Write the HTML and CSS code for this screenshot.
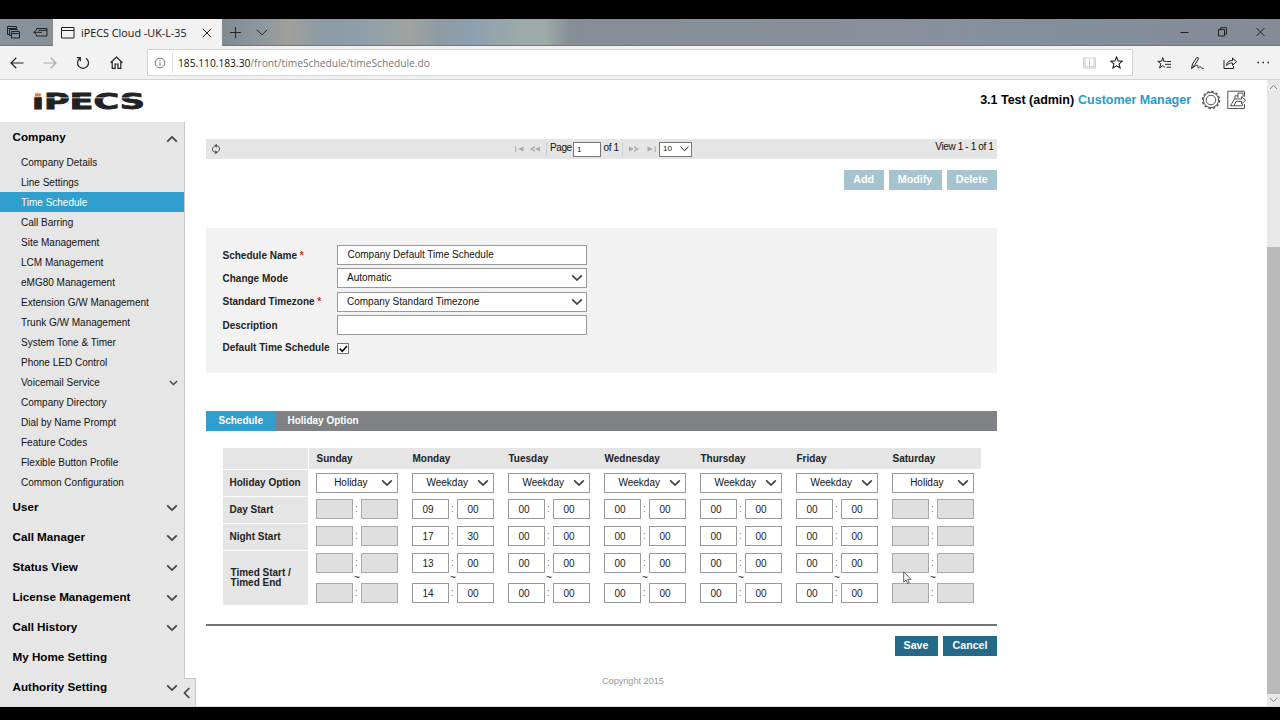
FILE: index.html
```html
<!DOCTYPE html>
<html lang="en">
<head>
<meta charset="utf-8">
<title>iPECS Cloud -UK-L-35</title>
<link rel="stylesheet" href="styles.css">
</head>
<body>
<svg class="defs" width="0" height="0">
  <symbol id="down" viewBox="0 0 12 8"><path d="M1.2 1.4 6 6.1l4.8-4.7" fill="none" stroke="currentColor" stroke-width="1.8"/></symbol>
</svg>
<div class="tabstrip">
  <svg class="strip-icon" width="13" height="13" viewBox="0 0 13 13"><path d="M2.5 8.5h-2v-8h9v2M.5 2.5h9M4.500 9.500h-2v-6h8v1M4.500 5.500h8v6.500h-8zM4.500 7.500h8"/></svg>
  <svg class="strip-icon aside" width="15" height="10" viewBox="0 0 15 10"><path d="M3.500 3V1.500h10.500v7.500H3.500V7.500M5.500 3.300h8.500M.8 5.300h8.200M3.200 3.200.9 5.300l2.300 2.200"/></svg>
  <div class="tab">
    <svg class="page-icon" width="14" height="12" viewBox="0 0 14 12"><path d="M.5.5h12.500v10.500H.5zM.5 3.500h12.500"/></svg>
    <span class="tab-title">iPECS Cloud -UK-L-35</span>
    <svg class="tab-close" width="10" height="10" viewBox="0 0 10 10"><path d="M.7.7l8.500 8.600M9.200.7.7 9.300"/></svg>
  </div>
  <svg class="plus" width="11" height="11" viewBox="0 0 11 11"><path d="M5.500 0v11M0 5.500h11"/></svg>
  <svg class="tabs-down" width="12" height="7" viewBox="0 0 12 7"><path d="M.8.8 6 5.800 11.200.8"/></svg>
  <div class="window-buttons">
    <svg width="9" height="10" viewBox="0 0 9 10"><path d="M.5 5.500h8"/></svg>
    <svg width="9" height="10" viewBox="0 0 9 10"><path d="M.5 2.500h6v6.500h-6zM2.500 2.500v-1.800h6v6.300h-2"/></svg>
    <svg width="9" height="10" viewBox="0 0 9 10"><path d="M.5 1l8 8M8.500 1l-8 8"/></svg>
  </div>
</div>
<div class="toolbar">
  <svg class="nav-icon back" width="14" height="12" viewBox="0 0 14 12"><path d="M1 6h12.500M6.300.8 1 6l5.300 5.200"/></svg>
  <svg class="nav-icon forward" width="14" height="12" viewBox="0 0 14 12"><path d="M.5 6h12M7.700.8 13 6l-5.300 5.200"/></svg>
  <svg class="nav-icon reload" width="14" height="14" viewBox="0 0 14 14"><path d="M4 2.200a5.500 5.500 0 1 0 6 0M4.300 5.200V1.700H.9" /></svg>
  <svg class="nav-icon home" width="13" height="13" viewBox="0 0 13 13"><path d="M.6 6.800 6.500 1l5.900 5.800M2.200 5.500v6.800h2.900V8h2.800v4.300h2.900V5.500"/></svg>
  <div class="address">
    <svg class="info" width="12" height="12" viewBox="0 0 12 12"><circle cx="6" cy="6" r="4.900"/><path d="M6 5v3.700M6 3.200v1.100"/></svg>
    <span class="divider"></span>
    <span class="url"><b>185.110.183.30</b>/front/timeSchedule/timeSchedule.do</span>
    <svg class="reader" width="13" height="12" viewBox="0 0 13 12"><path d="M.6 1h5.100l.8.700.8-.7h5.100v10H7.300l-.8.600-.8-.6H.6zM6.500 1.700v9.500M2 1v8.600h3.500M11 1v8.600H7.500"/></svg>
    <svg class="star" width="13" height="13" viewBox="0 0 13 13"><path d="M6.500 1l1.600 3.900 4.200.3-3.200 2.700 1 4.100-3.600-2.200L2.900 12l1-4.100L.7 5.200l4.200-.3z"/></svg>
  </div>
  <div class="tools">
    <svg width="15" height="14" viewBox="0 0 15 14"><path d="M9 5.300H6.800L5.700 1.500 4.500 5.300H.8l3 2.400-1.200 4.200L5.700 9.600l2.200 1.700M9.500 5.500h4.500M8 8.300h6M9.500 11.200h4.500"/></svg>
    <svg width="15" height="14" viewBox="0 0 15 14"><path d="M1.500 12.500 2.500 8 6.500 1.800q2.300-1 2 1L5 8.500l-3.500 4c3.500-2.500 5-3.500 6-3.300s-.5 2.300.7 2.500 1.500-1.500 2.400-.9.500 1.500 1.600 1.500h1.500"/></svg>
    <svg width="15" height="14" viewBox="0 0 15 14"><path d="M1 4v8.500h9.500V10M3.500 9.500c.5-3.500 2.500-5 6-5V2L13.500 5.700 9.500 9.300V7c-2.700 0-4.300.6-6 2.500z"/></svg>
    <svg width="15" height="14" viewBox="0 0 15 14"><path class="dots" d="M1.500 6.500H3M6.500 6.500H8M11.500 6.500H13"/></svg>
  </div>
</div>
<div class="page">
  <header>
    <svg class="logo" width="118" height="22" viewBox="0 0 118 22" role="img" aria-label="iPECS">
      <text x="1" y="16.700" textLength="113" lengthAdjust="spacingAndGlyphs">iPECS</text>
      <path class="logo-mask" d="M1 0h11.200v5.200H1z"/>
      <path class="logo-dot" d="M3.900 1.300h6v3.300h-6z"/>
      <path class="logo-cut" d="M14 5.800h99"/>
    </svg>
    <div class="account">
      <span>3.1 Test (admin)</span> <span class="role">Customer Manager</span>
      <svg class="gear" width="20" height="20" viewBox="0 0 20 20"><circle cx="10" cy="10" r="4.800"/><circle cx="10" cy="10" r="8.500" stroke-width="1.300" stroke-dasharray="2.600 1.850"/><circle cx="10" cy="10" r="7.600"/></svg>
      <svg class="logout" width="20" height="20" viewBox="0 0 20 20"><path d="M17.500 6.500V1.200H.8v17.300h16.700v-4.500M11 8V3H16v4M8 9V5.800h3M3.500 15.800 7.500 9h7V6.800l4.200 3.500-4.200 3.700v-2.600H9L7 15.800M3.500 15.800h12V14"/></svg>
    </div>
  </header>
  <div class="body">
    <nav>
      <div class="group">Company<svg class="chev up"><use href="#down"/></svg></div>
      <ul>
        <li>Company Details</li><li>Line Settings</li><li class="on">Time Schedule</li><li>Call Barring</li><li>Site Management</li><li>LCM Management</li><li>eMG80 Management</li><li>Extension G/W Management</li><li>Trunk G/W Management</li><li>System Tone &amp; Timer</li><li>Phone LED Control</li><li>Voicemail Service<svg class="chev small"><use href="#down"/></svg></li><li>Company Directory</li><li>Dial by Name Prompt</li><li>Feature Codes</li><li>Flexible Button Profile</li><li>Common Configuration</li>
      </ul>
      <div class="group">User<svg class="chev"><use href="#down"/></svg></div>
      <div class="group">Call Manager<svg class="chev"><use href="#down"/></svg></div>
      <div class="group">Status View<svg class="chev"><use href="#down"/></svg></div>
      <div class="group">License Management<svg class="chev"><use href="#down"/></svg></div>
      <div class="group">Call History<svg class="chev"><use href="#down"/></svg></div>
      <div class="group">My Home Setting</div>
      <div class="group">Authority Setting<svg class="chev"><use href="#down"/></svg></div>
      <div class="collapse"><svg width="8" height="12" viewBox="0 0 8 12"><path d="M6.300 1 1.500 6l4.800 5"/></svg></div>
    </nav>
    <main>
      <div class="pager">
        <svg class="refresh" width="10" height="12" viewBox="0 0 10 12"><path d="M4 9.200C1.200 8.800.8 5.500 2.500 3.800L3.700 2.800M6 2.800c2.800.4 3.200 3.700 1.500 5.400L6.300 9.200"/><path class="fill" d="M5.800.8v4L3.300 2.800zM4.200 7.200v4L6.700 9.200z"/></svg>
        <div class="pager-mid">
          <svg width="9" height="6" viewBox="0 0 9 6"><path d="M.3 0h1v6h-1zM8.500.5v5L3 3z"/></svg>
          <svg class="prev" width="10" height="6" viewBox="0 0 10 6"><path d="M5 0v1.500L2.500 3 5 4.500V6L0 3zM10 .5v5L5 3z"/></svg>
          <span class="sep"></span><span class="pg">Page</span><span class="pg-input">1</span><span class="pg of">of 1</span><span class="sep"></span>
          <svg class="next" width="10" height="6" viewBox="0 0 10 6"><path d="M5 0v1.500L7.500 3 5 4.500V6l5-3zM0 .5v5L5 3z"/></svg>
          <svg class="last" width="9" height="6" viewBox="0 0 9 6"><path d="M7.700 0h1v6h-1zM.5.5v5L6 3z"/></svg>
          <span class="pg-size">10<svg width="9" height="6" viewBox="0 0 9 6"><path d="M.5.600 4.500 4.800 8.500.6"/></svg></span>
        </div>
        <span class="view">View 1 - 1 of 1</span>
      </div>
      <div class="actions muted"><span class="w1">Add</span><span class="w2">Modify</span><span class="w3">Delete</span></div>
      <div class="form">
        <div class="row"><label>Schedule Name <em>*</em></label><div class="field text">Company Default Time Schedule</div></div>
        <div class="row"><label>Change Mode</label><div class="field">Automatic<svg class="chev"><use href="#down"/></svg></div></div>
        <div class="row"><label>Standard Timezone <em>*</em></label><div class="field">Company Standard Timezone<svg class="chev"><use href="#down"/></svg></div></div>
        <div class="row"><label>Description</label><div class="field"></div></div>
        <div class="row check-row"><label>Default Time Schedule</label><span class="check"><svg width="9" height="8" viewBox="0 0 9 8"><path d="M.8 3.700 3.300 6.300 8 1"/></svg></span></div>
      </div>
      <div class="tabs"><span class="on">Schedule</span><span>Holiday Option</span></div>
      <div class="grid">
        <div class="th head"></div>
        <div class="day">Sunday</div><div class="day">Monday</div><div class="day">Tuesday</div><div class="day">Wednesday</div><div class="day">Thursday</div><div class="day">Friday</div><div class="day">Saturday</div>
        <div class="th">Holiday Option</div>
        <div class="sel hol">Holiday<svg class="chev"><use href="#down"/></svg></div><div class="sel">Weekday<svg class="chev"><use href="#down"/></svg></div><div class="sel">Weekday<svg class="chev"><use href="#down"/></svg></div><div class="sel">Weekday<svg class="chev"><use href="#down"/></svg></div><div class="sel">Weekday<svg class="chev"><use href="#down"/></svg></div><div class="sel">Weekday<svg class="chev"><use href="#down"/></svg></div><div class="sel hol">Holiday<svg class="chev"><use href="#down"/></svg></div>
        <div class="th">Day Start</div>
        <div class="time off"><b></b>:<b></b></div><div class="time"><b>09</b>:<b>00</b></div><div class="time"><b>00</b>:<b>00</b></div><div class="time"><b>00</b>:<b>00</b></div><div class="time"><b>00</b>:<b>00</b></div><div class="time"><b>00</b>:<b>00</b></div><div class="time off"><b></b>:<b></b></div>
        <div class="th">Night Start</div>
        <div class="time off"><b></b>:<b></b></div><div class="time"><b>17</b>:<b>30</b></div><div class="time"><b>00</b>:<b>00</b></div><div class="time"><b>00</b>:<b>00</b></div><div class="time"><b>00</b>:<b>00</b></div><div class="time"><b>00</b>:<b>00</b></div><div class="time off"><b></b>:<b></b></div>
        <div class="th timed">Timed Start /<br>Timed End</div>
        <div class="range"><div class="time off"><b></b>:<b></b></div><i>~</i><div class="time off"><b></b>:<b></b></div></div>
        <div class="range"><div class="time"><b>13</b>:<b>00</b></div><i>~</i><div class="time"><b>14</b>:<b>00</b></div></div>
        <div class="range"><div class="time"><b>00</b>:<b>00</b></div><i>~</i><div class="time"><b>00</b>:<b>00</b></div></div>
        <div class="range"><div class="time"><b>00</b>:<b>00</b></div><i>~</i><div class="time"><b>00</b>:<b>00</b></div></div>
        <div class="range"><div class="time"><b>00</b>:<b>00</b></div><i>~</i><div class="time"><b>00</b>:<b>00</b></div></div>
        <div class="range"><div class="time"><b>00</b>:<b>00</b></div><i>~</i><div class="time"><b>00</b>:<b>00</b></div></div>
        <div class="range"><div class="time off"><b></b>:<b></b></div><i>~</i><div class="time off"><b></b>:<b></b></div></div>
      </div>
      <div class="rule"></div>
      <div class="actions"><span class="w4">Save</span><span class="w5">Cancel</span></div>
      <footer>Copyright 2015</footer>
    </main>
  </div>
  <div class="scrollbar">
    <svg width="9" height="6" viewBox="0 0 9 6"><path d="M1 5l3.500-3.700L8 5"/></svg>
    <div class="thumb"></div>
    <svg width="9" height="6" viewBox="0 0 9 6"><path d="M1 1l3.500 3.700L8 1"/></svg>
  </div>
</div>
<svg class="cursor" width="9" height="14" viewBox="0 0 9 14"><path d="M.7.800v10.400l2.400-2.200 1.500 3.500 1.600-.7-1.500-3.400H8z"/></svg>
</body>
</html>
```
FILE: styles.css
```css
* { box-sizing: border-box; }
body {
  margin: 0;
  width: 1280px;
  height: 720px;
  padding: 19px 0 13px;
  overflow: hidden;
  background: #000;
  color: #111;
  font: 10px/12px "Liberation Sans", Arial, sans-serif;
  display: flex;
  flex-direction: column;
}
svg { display: block; flex: none; fill: none; stroke: #222; stroke-width: 1; }
.defs { position: absolute; }

/* browser frame */
.tabstrip {
  height: 27px;
  flex: none;
  display: flex;
  align-items: center;
  padding-left: 7px;
  border-bottom: 1px solid #6f7680;
  background: linear-gradient(90deg, #87929b 0, #808b94 225px, #8c989d 260px, #a09f9b 290px, #8d9ca4 320px, #8d9fac 360px, #a0a39f 410px, #8d9ba5 440px, #8da0b0 473px, #9eaba8 525px, #9eaba8 545px, #878e98 570px, #878f98 700px, #8a8f9b 900px, #83909f 1020px, #868a95 1280px);
}
.aside { margin-left: 13px; }
.tab {
  width: 169px;
  height: 27px;
  margin: 0 0 -1px 5px;
  padding: 0 10px 0 8px;
  display: flex;
  align-items: center;
  background: #f2f2f2;
}
.tab-title {
  margin-left: 6px;
  flex: 1;
  font: 10.8px/16px "Open Sans", "Noto Sans", sans-serif;
  white-space: nowrap;
}
.plus { margin-left: 8px; margin-top: 1px; }
.tabs-down { margin-left: 15px; }
.window-buttons { margin-left: auto; margin-right: 15px; display: flex; gap: 29px; }
.toolbar {
  height: 34px;
  flex: none;
  display: flex;
  align-items: center;
  padding-left: 10px;
  background: #f2f2f2;
  border-bottom: 1px solid #d4d4d4;
}
.nav-icon { stroke-width: 1.2; }
.forward { margin-left: 19px; stroke: #aaa; }
.reload { margin-left: 19px; }
.home { margin-left: 20px; }
.address {
  width: 986px;
  height: 27px;
  margin-left: 24px;
  padding: 0 9px 0 6px;
  display: flex;
  align-items: center;
  background: #fff;
  border: 1px solid #d2d2d2;
}
.info { stroke: #777; }
.divider { width: 1px; height: 20px; margin-left: 6px; background: #ddd; }
.url {
  flex: 1;
  margin-left: 5px;
  color: #777;
  font: 10.22px/16px "Open Sans", "Noto Sans", sans-serif;
}
.url b { font-weight: 400; color: #111; }
.reader { stroke: #ccc; }
.star { margin-left: 14px; stroke-width: 1.1; }
.tools { margin-left: 23.5px; display: flex; gap: 18px; }
.dots { stroke-width: 1.4; }

/* page */
.page {
  position: relative;
  flex: 1;
  background: #fff;
  border-bottom: 1px solid #ddd;
}
header { height: 42px; display: flex; justify-content: space-between; padding: 0 33px 0 31px; }
.logo { margin-top: 12px; overflow: visible; }
.logo text { font: bold 20.500px "DejaVu Sans", sans-serif; fill: #222; stroke: #222; stroke-width: .8; }
.logo-mask { fill: #fff; stroke: none; }
.logo-dot { fill: #e08040; stroke: none; }
.logo-cut { stroke: #fff; stroke-width: .7; }
.account { height: 40px; display: flex; align-items: center; font-weight: bold; font-size: 12.5px; letter-spacing: -.02px; color: #000; }
.role { margin-left: 4px; color: #2b9ac8; }
.gear, .logout { stroke: #555; }
.gear { margin-left: 10px; }
.logout { margin-left: 6px; }
.body { display: flex; height: 584px; }
nav { position: relative; width: 185px; background: #e6e6e6; border-right: 1px solid #c8c8c8; }
.group {
  height: 30px;
  padding: 0 6px 1px 12.500px;
  display: flex;
  align-items: center;
  justify-content: space-between;
  font-size: 11.67px;
  font-weight: bold;
  color: #000;
}
.chev { width: 12px; height: 8px; color: #444; stroke: none; }
.group .chev { margin-top: 2px; }
.chev.up { transform: rotate(180deg); position: relative; top: 1px; }
.chev.small { width: 9px; height: 6px; margin-right: 6px; }
nav ul { list-style: none; margin: 0; padding: 0 0 .5px; }
nav li { height: 20.03px; padding: 1px 0 0 21px; display: flex; align-items: center; justify-content: space-between; }
nav li.on { background: #309fce; color: #fff; }
.collapse {
  position: absolute;
  left: 181px;
  bottom: 0;
  width: 15px;
  height: 28px;
  padding: 8px 0 0 2px;
  background: #e6e6e6;
  border: solid #c8c8c8;
  border-width: 1px 1px 0 0;
  clip-path: polygon(3px 0, 100% 0, 100% 100%, 0 100%, 0 2px, 3px 2px);
}
.collapse svg { stroke: #444; stroke-width: 1.700; }
main { width: 791px; margin-left: 21px; padding-top: 17px; }
.pager { height: 20px; display: flex; background: #e5e5e5; }
.refresh { margin: 4px 0 0 5px; stroke: #444; }
.refresh .fill, .pager-mid > svg { fill: #aaa; stroke: none; }
.refresh .fill { fill: #444; }
.pager-mid { display: flex; align-items: center; margin-left: 293.500px; }
.pager-mid .prev { margin-left: 6.500px; }
.sep { width: 1px; height: 14px; background: #c3d2da; margin-left: 6px; }
.pg { width: 22px; margin: -3px 0 0 3px; font-size: 10px; letter-spacing: -.4px; white-space: nowrap; }
.of { width: 15px; margin-left: 2.500px; }
.pg-input, .pg-size { background: #fff; border: 1px solid #777; height: 15px; font-size: 8px; line-height: 14px; padding-left: 3px; }
.pg-input { width: 28px; margin-left: 1px; }
.of + .sep { margin-left: 3px; }
.sep + .next { margin-left: 6px; }
.last { margin-left: 8px; }
.pg-size { width: 33px; margin-left: 3.500px; display: flex; align-items: center; justify-content: space-between; padding-right: 2px; }
.view { margin: 2px 3.500px 0 auto; font-size: 10px; letter-spacing: -.37px; }
.actions { display: flex; justify-content: flex-end; gap: 5px; margin-top: 10px; }
.actions span { height: 20px; background: #246a88; color: #fff; font: bold 10.7px/19px "Liberation Sans", Arial, sans-serif; text-align: center; }
.muted { margin-top: 10.5px; }
.muted span { background: #a6c3d0; }
.w1 { width: 39.500px; } .w2 { width: 53px; } .w3 { width: 50.500px; } .w4 { width: 43px; } .w5 { width: 54px; }
.form { height: 145px; margin-top: 38.500px; padding: 17px 0 0 16.5px; background: #f2f2f2; }
.row { display: flex; align-items: center; height: 20px; margin-bottom: 3.400px; }
.row label { width: 114.500px; padding-top: 1px; font-weight: bold; color: #222; }
.row em { color: #d22; font-style: normal; }
.field { width: 250px; height: 20px; padding: 0 3px 0 9px; border: 1px solid #999; background: #fff; display: flex; align-items: center; justify-content: space-between; }
.text { padding-left: 9.500px; }
.check-row { margin-top: -1.500px; }
.check { width: 12px; height: 11px; margin-top: 3px; border: 1px solid #777; background: #fff; }
.check svg { margin: 1px 0 0 .5px; stroke: #111; stroke-width: 1.700; }
.tabs { height: 20px; margin-top: 38px; display: flex; background: #808185; color: #fff; font-weight: bold; line-height: 20px; }
.tabs span { padding: 0 11.500px; }
.tabs .on { width: 70px; padding: 0 12.500px; background: #309fce; }
.grid {
  display: grid;
  grid-template-columns: 86px repeat(7, 96px);
  grid-template-rows: 22.500px 27px 26.800px 26.800px 55.900px;
  width: 758px;
  margin: 16.500px 0 0 16.500px;
}
.th, .day { background: #e5e5e5; font-weight: bold; color: #222; display: flex; align-items: center; }
.th { margin: 0 1px 1px 0; padding-left: 7px; }
.day { margin-bottom: 1px; padding: 1px 0 0 8px; }
.timed { padding-left: 8px; line-height: 10px; }
.sel { width: 82px; height: 20px; margin: 3px 0 0 7px; border: 1px solid #999; display: flex; align-items: center; justify-content: flex-end; padding-right: 4px; }
.sel .chev { margin-left: 8.500px; }
.hol .chev { margin-left: 13px; }
.time { display: flex; align-items: center; justify-content: space-between; width: 82px; height: 20px; margin: 2.200px 0 0 7px; color: #777; }
.time b { width: 37px; height: 20px; padding-left: 10px; border: 1px solid #999; font-weight: 400; line-height: 19px; color: #222; }
.off b { background: #dfdfdf; border-color: #a8a8a8; }
.range i { display: block; height: 10px; margin: 0 0 -2.200px 1px; text-align: center; font-style: normal; line-height: 10px; }
.rule { height: 2px; margin-top: 17.500px; background: #737378; }
.rule + .actions { gap: 5.500px; }
footer { margin-top: 19.500px; padding-left: 396px; color: #999; font-size: 9.150px; }
.scrollbar {
  position: absolute;
  top: 0;
  right: 0;
  width: 13px;
  height: 626px;
  padding: 4px 0 3px;
  background: #e8e8e8;
  display: flex;
  flex-direction: column;
  align-items: center;
}
.scrollbar svg { stroke: #888; }
.thumb { width: 13px; height: 447px; margin: 156.500px 0 auto; background: #b9b9b9; }
.cursor { position: absolute; left: 902.500px; top: 570.500px; fill: #fff; stroke: #555; stroke-width: .900; }
```
